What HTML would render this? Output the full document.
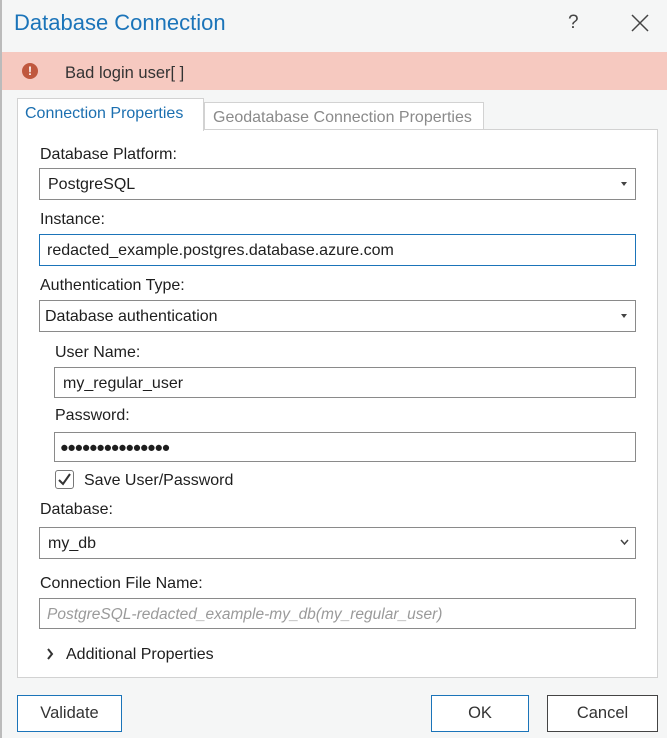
<!DOCTYPE html>
<html><head><style>
body{margin:0;width:667px;height:738px;background:#f5f6f6;font-family:"Liberation Sans",sans-serif;position:relative;overflow:hidden;color:#1e1e1e}
.a{position:absolute}
.lbl{position:absolute;font-size:16px;color:#1e1e1e}
.box{position:absolute;background:#fff;border:1px solid #8a8a8a;box-sizing:border-box;font-size:16px;padding-left:8px;display:flex;align-items:center;padding-top:2px}
.dd::after{content:"";position:absolute;right:8px;top:50%;margin-top:-2px;border-left:3.5px solid transparent;border-right:3.5px solid transparent;border-top:4px solid #444}
.btn{position:absolute;box-sizing:border-box;background:#fff;font-size:16.5px;display:flex;align-items:center;justify-content:center;color:#333}
</style></head><body>
<div class="a" style="left:0;top:0;width:2px;height:738px;background:#bbb"></div>
<div class="a" style="left:14px;top:10px;font-size:22px;color:#1b74b9">Database Connection</div>
<div class="a" style="left:568px;top:12px;font-size:19px;color:#444">?</div>
<svg class="a" style="left:631px;top:14px" width="18" height="18"><path d="M1 1L17 17M17 1L1 17" stroke="#444" stroke-width="1.5"/></svg>
<div class="a" style="left:2px;top:52px;width:665px;height:38px;background:#f6c9c0"></div>
<div class="a" style="left:22px;top:63px;width:16px;height:16px;border-radius:50%;background:#c0583e;color:#fff;font-size:12px;font-weight:bold;text-align:center;line-height:16px">!</div>
<div class="a" style="left:65px;top:64px;font-size:16.5px;color:#333">Bad login user[ ]</div>
<div class="a" style="left:17px;top:129px;width:641px;height:549px;background:#fff;border:1px solid #d2d2d2;box-sizing:border-box"></div>
<div class="a" style="left:204px;top:102px;width:280px;height:28px;background:#fff;border:1px solid #d2d2d2;box-sizing:border-box;font-size:16px;color:#8a8a8a;padding:6px 0 0 8px;white-space:nowrap">Geodatabase Connection Properties</div>
<div class="a" style="left:17px;top:98px;width:187px;height:33px;background:#fff;border:1px solid #d2d2d2;border-bottom:none;box-sizing:border-box;font-size:16px;color:#1b6fb0;padding:6px 0 0 7px;white-space:nowrap">Connection Properties</div>
<div class="lbl" style="left:40px;top:146px">Database Platform:</div>
<div class="box dd" style="left:39px;top:168px;width:597px;height:32px">PostgreSQL</div>
<div class="lbl" style="left:40px;top:211px">Instance:</div>
<div class="box" style="left:39px;top:234px;width:597px;height:32px;border-color:#1b74b9;padding-left:7px">redacted_example.postgres.database.azure.com</div>
<div class="lbl" style="left:40px;top:277px">Authentication Type:</div>
<div class="box dd" style="left:39px;top:300px;width:597px;height:32px;padding-left:5px">Database authentication</div>
<div class="lbl" style="left:55px;top:344px">User Name:</div>
<div class="box" style="left:54px;top:367px;width:582px;height:31px">my_regular_user</div>
<div class="lbl" style="left:55px;top:407px">Password:</div>
<div class="box" style="left:54px;top:432px;width:582px;height:30px;font-size:14.5px;letter-spacing:-1.5px;padding-left:5px">●●●●●●●●●●●●●●●</div>
<div class="a" style="left:55px;top:470px;width:19px;height:19px;border:1px solid #777;border-radius:3px;box-sizing:border-box;background:#fff"></div>
<svg class="a" style="left:57px;top:472px" width="15" height="15"><path d="M2 8L6 12L13 2" stroke="#333" stroke-width="2" fill="none"/></svg>
<div class="lbl" style="left:84px;top:472px">Save User/Password</div>
<div class="lbl" style="left:40px;top:501px">Database:</div>
<div class="box" style="left:39px;top:527px;width:597px;height:32px">my_db</div>
<svg class="a" style="left:620px;top:539px" width="9" height="7"><path d="M1 1L4.5 5L8 1" stroke="#444" stroke-width="1.5" fill="none"/></svg>
<div class="lbl" style="left:40px;top:575px">Connection File Name:</div>
<div class="box" style="left:39px;top:598px;width:597px;height:31px;color:#9a9a9a;font-style:italic;font-size:15.5px;padding-left:7px">PostgreSQL-redacted_example-my_db(my_regular_user)</div>
<svg class="a" style="left:46px;top:648px" width="8" height="12"><path d="M2 1L6 6L2 11" stroke="#333" stroke-width="2" fill="none"/></svg>
<div class="lbl" style="left:66px;top:646px">Additional Properties</div>
<div class="btn" style="left:17px;top:695px;width:105px;height:37px;border:1px solid #1b74b9">Validate</div>
<div class="btn" style="left:431px;top:695px;width:98px;height:37px;border:1px solid #1b74b9">OK</div>
<div class="btn" style="left:547px;top:695px;width:111px;height:37px;border:1px solid #444">Cancel</div>
</body></html>
